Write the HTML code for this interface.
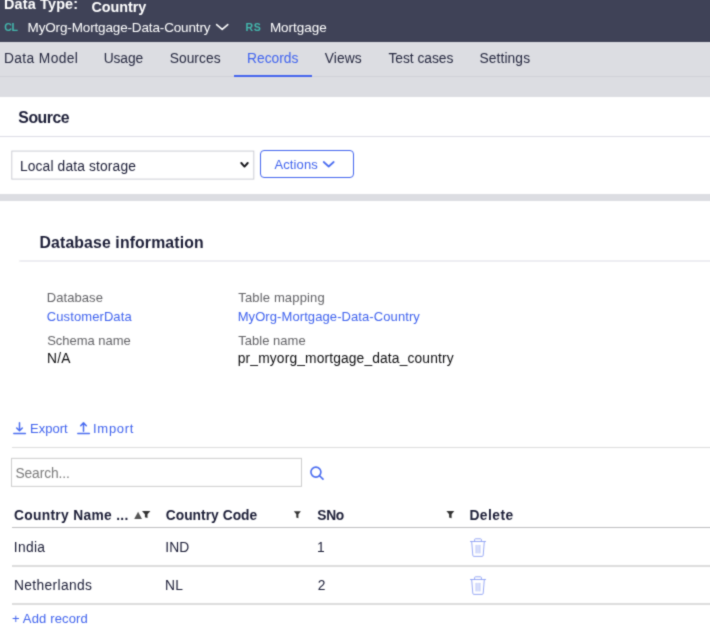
<!DOCTYPE html>
<html><head><meta charset="utf-8">
<style>
*{box-sizing:border-box;margin:0;padding:0}
html,body{width:710px;height:628px;overflow:hidden;background:#fff}
body{font-family:"Liberation Sans",sans-serif;position:relative}
.t{position:absolute;white-space:nowrap;line-height:1}
.bg{position:absolute}
svg{display:block;overflow:visible}
#w{position:absolute;left:-12px;top:-12px;width:734px;height:652px;filter:url(#soft)}
#c{position:absolute;left:12px;top:12px;width:710px;height:628px}
</style></head><body><svg width="0" height="0" style="position:absolute"><filter id="soft" x="0" y="0" width="100%" height="100%" color-interpolation-filters="sRGB"><feConvolveMatrix order="3" kernelMatrix="0.03 0.1 0.03 0.1 0.48 0.1 0.03 0.1 0.03" divisor="1" edgeMode="duplicate" preserveAlpha="false"/></filter></svg><div id="w"><div id="c">
<div class="bg" style="left:-12px;top:-12px;width:734px;height:54px;background:#3f4257"></div>
<div class="bg" style="left:-12px;top:42px;width:734px;height:55px;background:#dcdde2"></div>
<div class="bg" style="left:-12px;top:76.3px;width:734px;height:1px;background:#d0d1d8"></div>
<div class="bg" style="left:233.6px;top:74.6px;width:78.1px;height:2.2px;background:#4463ee"></div>
<svg class="bg" style="left:215px;top:22px" width="14" height="10" viewBox="0 0 14 10"><path d="M1.6 2.6 L7.2 7.4 L12.8 2.6" fill="none" stroke="#fff" stroke-width="1.5" stroke-linecap="round" stroke-linejoin="round"/></svg>

<div class="bg" style="left:-12px;top:136px;width:734px;height:1px;background:#dddde6"></div>
<div class="bg" style="left:11px;top:150px;width:243px;height:29px;border:1px solid #cccdd4;background:#fff;transform:translate(0.3px,0.6px)"></div>
<svg class="bg" style="left:239px;top:160px" width="12" height="10" viewBox="0 0 12 10"><path d="M2.3 3 L5.5 6.6 L8.7 3" fill="none" stroke="#15151a" stroke-width="1.9" stroke-linecap="round" stroke-linejoin="round"/></svg>
<div class="bg" style="left:260px;top:150px;width:93.5px;height:28px;border:1px solid #4466ee;border-radius:4px;background:#fff"></div>
<svg class="bg" style="left:321px;top:159px" width="14" height="10" viewBox="0 0 14 10"><path d="M2.7 3.0 L7.7 7.5 L12.7 3.0" fill="none" stroke="#4a6cf0" stroke-width="1.7" stroke-linecap="round" stroke-linejoin="round"/></svg>
<div class="bg" style="left:-12px;top:194px;width:734px;height:7px;background:#dcdde2"></div>
<div class="bg" style="left:19px;top:260px;width:703px;height:1px;background:#dddde6;transform:translate(0.3px,0.5px)"></div>

<!-- export / import icons -->
<svg class="bg" style="left:13px;top:422px" width="13" height="13" viewBox="0 0 13 13"><path d="M6.5 0.8 V8.6 M3.7 6 L6.5 8.8 L9.3 6 M0.8 11.6 H12.4" fill="none" stroke="#4a6cf0" stroke-width="1.5" stroke-linecap="round" stroke-linejoin="round"/></svg>
<svg class="bg" style="left:77px;top:422px" width="13" height="13" viewBox="0 0 13 13"><path d="M6.5 9.2 V1 M3.7 3.7 L6.5 0.9 L9.3 3.7 M0.8 11.6 H12.4" fill="none" stroke="#4a6cf0" stroke-width="1.5" stroke-linecap="round" stroke-linejoin="round"/></svg>
<div class="bg" style="left:11.5px;top:447px;width:710.5px;height:1px;background:#dcdcdc"></div>

<div class="bg" style="left:11px;top:457px;width:291px;height:29px;border:1px solid #cdcdcd;background:#fff;transform:translate(0px,0.85px)"></div>
<svg class="bg" style="left:308px;top:464px" width="18" height="18" viewBox="0 0 18 18"><circle cx="7.9" cy="8.1" r="5.0" fill="none" stroke="#4a6cf0" stroke-width="1.6"/><path d="M11.8 12 L15 15.1" stroke="#4a6cf0" stroke-width="1.7" stroke-linecap="round"/></svg>

<!-- header icons -->
<svg class="bg" style="left:134px;top:510px" width="18" height="10" viewBox="0 0 18 10"><path d="M0.2 9 L4.1 1.8 L8 9 Z" fill="#555"/><path d="M8 0.9 H16.4 L13.5 4.2 V8 L10.9 7.2 V4.2 Z" fill="#333"/></svg>
<svg class="bg" style="left:293px;top:509.9px" width="10" height="10" viewBox="0 0 10 10"><path d="M0.8 1.2 H7.9 L5.4 4.2 V8.3 L3.3 7.5 V4.2 Z" fill="#333"/></svg>
<svg class="bg" style="left:446px;top:509.9px" width="10" height="10" viewBox="0 0 10 10"><path d="M0.4 1.0 H8.3 L5.6 4.2 V8.3 L3.1 7.5 V4.2 Z" fill="#333"/></svg>

<div class="bg" style="left:11.5px;top:526.6px;width:710.5px;height:1.4px;background:#bdbdbf"></div>
<div class="bg" style="left:11.5px;top:565.3px;width:710.5px;height:1.4px;background:#dcdcdc"></div>
<div class="bg" style="left:11.5px;top:603.3px;width:710.5px;height:1.4px;background:#dcdcdc"></div>

<!-- trash icons -->
<svg class="bg" style="left:470px;top:538px" width="16" height="20" viewBox="0 0 16 20"><g fill="none" stroke="#8ea2f4" stroke-width="0.9" stroke-linecap="round" stroke-linejoin="round"><path d="M0.4 3.5 H15.6"/><path d="M4.6 3.4 V1.6 Q4.6 0.8 5.4 0.8 H10.6 Q11.4 0.8 11.4 1.6 V3.4"/><path d="M1.7 3.6 L2.8 17.3 Q2.9 18.4 4 18.4 H12 Q13.1 18.4 13.2 17.3 L14.3 3.6"/><path d="M6.1 7.3 V15 M8 7.3 V15 M9.9 7.3 V15" stroke-width="0.7"/></g></svg>
<svg class="bg" style="left:470px;top:576px" width="16" height="20" viewBox="0 0 16 20"><g fill="none" stroke="#8ea2f4" stroke-width="0.9" stroke-linecap="round" stroke-linejoin="round"><path d="M0.4 3.5 H15.6"/><path d="M4.6 3.4 V1.6 Q4.6 0.8 5.4 0.8 H10.6 Q11.4 0.8 11.4 1.6 V3.4"/><path d="M1.7 3.6 L2.8 17.3 Q2.9 18.4 4 18.4 H12 Q13.1 18.4 13.2 17.3 L14.3 3.6"/><path d="M6.1 7.3 V15 M8 7.3 V15 M9.9 7.3 V15" stroke-width="0.7"/></g></svg>
<div class="t" id="h1" style="left:4px;top:-3px;transform:translate(0.03px,0.31px);font-size:14.4px;font-weight:bold;color:#ffffff;letter-spacing:0.172px">Data Type:</div>
<div class="t" id="h2" style="left:91px;top:-1px;transform:translate(0.50px,0.91px);font-size:14.4px;font-weight:bold;color:#ffffff;letter-spacing:-0.083px">Country</div>
<div class="t" id="cl" style="left:4px;top:22px;transform:translate(0.30px,0.23px);font-size:10.6px;font-weight:bold;color:#43b7ad;letter-spacing:-0.400px">CL</div>
<div class="t" id="cn" style="left:27px;top:21px;transform:translate(0.57px,0.07px);font-size:13.5px;color:#ffffff;letter-spacing:-0.148px">MyOrg-Mortgage-Data-Country</div>
<div class="t" id="rs" style="left:245px;top:22px;transform:translate(0.53px,0.23px);font-size:10.6px;font-weight:bold;color:#43b7ad;letter-spacing:0.550px">RS</div>
<div class="t" id="mo" style="left:269px;top:21px;transform:translate(0.90px,0.07px);font-size:13.5px;color:#ffffff;letter-spacing:-0.029px">Mortgage</div>
<div class="t" id="t1" style="left:3px;top:51px;transform:translate(0.93px,0.52px);font-size:13.8px;color:#262940;letter-spacing:0.372px">Data Model</div>
<div class="t" id="t2" style="left:103px;top:51px;transform:translate(0.75px,0.52px);font-size:13.8px;color:#262940;letter-spacing:-0.125px">Usage</div>
<div class="t" id="t3" style="left:169px;top:51px;transform:translate(0.65px,0.52px);font-size:13.8px;color:#262940;letter-spacing:0.050px">Sources</div>
<div class="t" id="t4" style="left:247px;top:51px;transform:translate(0.00px,0.52px);font-size:13.8px;color:#4063ee;letter-spacing:0.000px">Records</div>
<div class="t" id="t5" style="left:324px;top:51px;transform:translate(0.83px,0.52px);font-size:13.8px;color:#262940;letter-spacing:0.038px">Views</div>
<div class="t" id="t6" style="left:388px;top:51px;transform:translate(0.38px,0.52px);font-size:13.8px;color:#262940;letter-spacing:-0.028px">Test cases</div>
<div class="t" id="t7" style="left:479px;top:51px;transform:translate(0.40px,0.52px);font-size:13.8px;color:#262940;letter-spacing:0.114px">Settings</div>
<div class="t" id="src" style="left:18px;top:109px;transform:translate(0.33px,0.93px);font-size:15.8px;font-weight:bold;color:#1b1d36;letter-spacing:-0.470px">Source</div>
<div class="t" id="sel" style="left:19px;top:159px;transform:translate(0.95px,0.82px);font-size:13.8px;color:#1b1d36;letter-spacing:0.141px">Local data storage</div>
<div class="t" id="act" style="left:274px;top:157px;transform:translate(0.40px,0.50px);font-size:13.0px;color:#4063ee;letter-spacing:0.133px">Actions</div>
<div class="t" id="dbi" style="left:39px;top:234px;transform:translate(0.53px,0.73px);font-size:15.8px;font-weight:bold;color:#1b1d36;letter-spacing:0.134px">Database information</div>
<div class="t" id="l1" style="left:46px;top:291px;transform:translate(0.75px,0.10px);font-size:13.0px;color:#636367;letter-spacing:0.071px">Database</div>
<div class="t" id="v1" style="left:46px;top:309px;transform:translate(0.77px,0.90px);font-size:13.0px;color:#4063ee;letter-spacing:0.095px">CustomerData</div>
<div class="t" id="l2" style="left:47px;top:333px;transform:translate(0.17px,0.50px);font-size:13.0px;color:#636367;letter-spacing:-0.015px">Schema name</div>
<div class="t" id="v2" style="left:46px;top:352px;transform:translate(0.97px,0.02px);font-size:13.8px;color:#0e0e10;letter-spacing:0.225px">N/A</div>
<div class="t" id="l3" style="left:238px;top:291px;transform:translate(0.22px,0.10px);font-size:13.0px;color:#636367;letter-spacing:0.162px">Table mapping</div>
<div class="t" id="v3" style="left:237px;top:309px;transform:translate(0.65px,0.90px);font-size:13.0px;color:#4063ee;letter-spacing:0.088px">MyOrg-Mortgage-Data-Country</div>
<div class="t" id="l4" style="left:238px;top:333px;transform:translate(0.32px,0.50px);font-size:13.0px;color:#636367;letter-spacing:0.017px">Table name</div>
<div class="t" id="v4" style="left:237px;top:352px;transform:translate(0.80px,0.02px);font-size:13.8px;color:#0e0e10;letter-spacing:0.141px">pr_myorg_mortgage_data_country</div>
<div class="t" id="ex" style="left:29px;top:422px;transform:translate(1.00px,0.20px);font-size:13.0px;color:#4063ee;letter-spacing:-0.000px">Export</div>
<div class="t" id="im" style="left:93px;top:422px;transform:translate(0.03px,0.20px);font-size:13.0px;color:#4063ee;letter-spacing:0.710px">Import</div>
<div class="t" id="se" style="left:15px;top:466px;transform:translate(0.38px,0.62px);font-size:13.8px;color:#7b7b7b;letter-spacing:-0.094px">Search...</div>
<div class="t" id="c1" style="left:13px;top:509px;transform:translate(0.88px,0.12px);font-size:13.8px;font-weight:bold;color:#1b1d36;letter-spacing:0.317px">Country Name ...</div>
<div class="t" id="c2" style="left:165px;top:509px;transform:translate(0.68px,0.12px);font-size:13.8px;font-weight:bold;color:#1b1d36;letter-spacing:0.032px">Country Code</div>
<div class="t" id="c3" style="left:317px;top:509px;transform:translate(0.37px,0.12px);font-size:13.8px;font-weight:bold;color:#1b1d36;letter-spacing:-0.375px">SNo</div>
<div class="t" id="c4" style="left:469px;top:509px;transform:translate(0.42px,0.12px);font-size:13.8px;font-weight:bold;color:#1b1d36;letter-spacing:0.470px">Delete</div>
<div class="t" id="r11" style="left:13px;top:541px;transform:translate(0.70px,0.02px);font-size:13.8px;color:#1b1d36;letter-spacing:0.350px">India</div>
<div class="t" id="r12" style="left:165px;top:541px;transform:translate(0.30px,0.02px);font-size:13.8px;color:#1b1d36;letter-spacing:0.050px">IND</div>
<div class="t" id="r13" style="left:316px;top:541px;transform:translate(1.00px,0.22px);font-size:13.8px;color:#1b1d36;letter-spacing:0.000px">1</div>
<div class="t" id="r21" style="left:14px;top:579px;transform:translate(0.00px,0.42px);font-size:13.8px;color:#1b1d36;letter-spacing:0.350px">Netherlands</div>
<div class="t" id="r22" style="left:165px;top:579px;transform:translate(0.10px,0.42px);font-size:13.8px;color:#1b1d36;letter-spacing:0.200px">NL</div>
<div class="t" id="r23" style="left:317px;top:579px;transform:translate(0.67px,0.22px);font-size:13.8px;color:#1b1d36;letter-spacing:0.000px">2</div>
<div class="t" id="add" style="left:12px;top:612px;transform:translate(0.07px,0.40px);font-size:13.0px;color:#4063ee;letter-spacing:0.150px">+ Add record</div>
</div></div>
</body></html>
